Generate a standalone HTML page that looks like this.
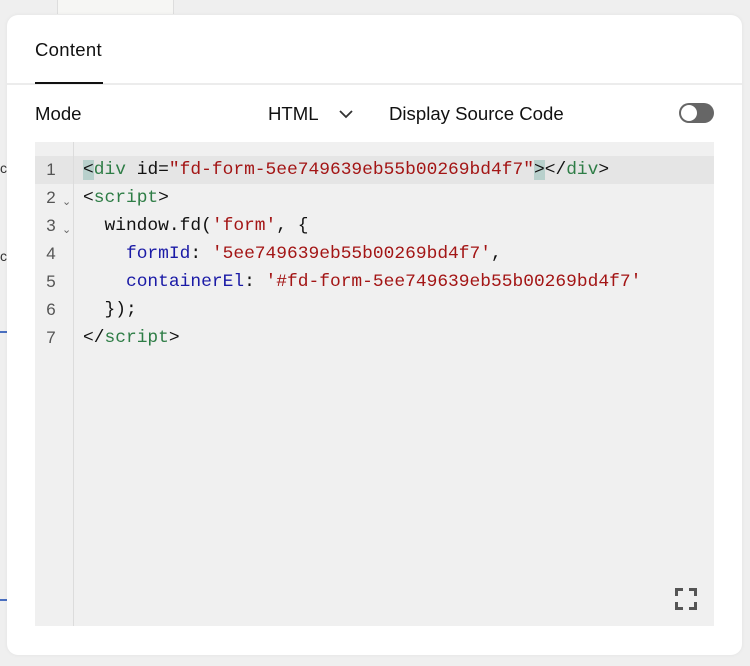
<!DOCTYPE html>
<html><head><style>
*{margin:0;padding:0;box-sizing:border-box}
body{width:750px;height:666px;background:#efefef;position:relative;overflow:hidden;font-family:"Liberation Sans",sans-serif}
.bgcard{position:absolute;left:57px;top:0;width:117px;height:14px;background:#f6f6f4;border-left:1px solid #ddd;border-right:1px solid #ddd}
.modal{position:absolute;left:7px;top:15px;width:735px;height:640px;background:#fff;border-radius:11px;box-shadow:0 0 4px rgba(0,0,0,.06)}
.tab{position:absolute;left:28px;top:24px;font-size:18.5px;letter-spacing:0.3px;color:#111}
.ul{position:absolute;left:28px;top:67px;width:68px;height:2px;background:#111}
.hr{position:absolute;left:0;top:68px;width:735px;height:2px;background:#ececec}
.lbl{position:absolute;top:88px;font-size:18.6px;color:#111}
.toggle{position:absolute;left:672px;top:88px;width:35px;height:20px;border-radius:10px;background:#666}
.toggle:after{content:"";position:absolute;left:2px;top:2px;width:16px;height:16px;border-radius:50%;background:#fff}
.ed{position:absolute;left:28px;top:127px;width:679px;height:484px;background:#f0f0f0}
.gut{position:absolute;left:0;top:0;width:39px;height:484px;border-right:1px solid #dcdcdc}
.hl{position:absolute;left:0;top:14px;width:679px;height:28px;background:#e5e5e5}
.ln{position:absolute;left:0;width:32px;font-family:"Liberation Sans",sans-serif;font-size:17px;color:#555;text-align:center;line-height:28px}
.fold{position:absolute;left:27px;font-size:11px;color:#666;line-height:28px}
.code{position:absolute;left:48px;top:14px;font-family:"Liberation Mono",monospace;font-size:17.9px;line-height:28px;color:#111;white-space:pre}
.t{color:#2e7d46}.s{color:#a31515}.p{color:#1a1aa6}
.cur{background:#b8d0cc}
.side{position:absolute;left:0;font-size:14px;color:#333}
.bl{position:absolute;left:0;width:7px;height:2px;background:#4a6fc0}
</style></head><body>
<div class="bgcard"></div>
<div class="side" style="top:160px">c</div>
<div class="side" style="top:248px">c</div>
<div class="bl" style="top:331px"></div>
<div class="bl" style="top:599px"></div>
<div class="modal">
<div class="tab">Content</div>
<div class="hr"></div>
<div class="ul"></div>
<div class="lbl" style="left:28px">Mode</div>
<div class="lbl" style="left:261px">HTML</div>
<svg style="position:absolute;left:332px;top:94px" width="14" height="10"><path d="M1 2 L7 8 L13 2" fill="none" stroke="#333" stroke-width="1.8"/></svg>
<div class="lbl" style="left:382px">Display Source Code</div>
<div class="toggle"></div>
<div class="ed">
<div class="hl"></div>
<div class="gut"></div>
<div class="ln" style="top:14px">1</div>
<div class="ln" style="top:42px">2</div>
<div class="ln" style="top:70px">3</div>
<div class="ln" style="top:98px">4</div>
<div class="ln" style="top:126px">5</div>
<div class="ln" style="top:154px">6</div>
<div class="ln" style="top:182px">7</div>
<div class="fold" style="top:46px">⌄</div>
<div class="fold" style="top:74px">⌄</div>
<div class="code"><span class="cur">&lt;</span><span class="t">div</span> id=<span class="s">"fd-form-5ee749639eb55b00269bd4f7"</span><span class="cur">&gt;</span>&lt;/<span class="t">div</span>&gt;
&lt;<span class="t">script</span>&gt;
  window.fd(<span class="s">'form'</span>, {
    <span class="p">formId</span>: <span class="s">'5ee749639eb55b00269bd4f7'</span>,
    <span class="p">containerEl</span>: <span class="s">'#fd-form-5ee749639eb55b00269bd4f7'</span>
  });
&lt;/<span class="t">script</span>&gt;</div>
<svg style="position:absolute;left:640px;top:446px" width="22" height="22" fill="none" stroke="#555" stroke-width="3"><path d="M1.5 8V1.5H8M14 1.5H20.5V8M20.5 14V20.5H14M8 20.5H1.5V14"/></svg>
</div>
</div>
</body></html>
